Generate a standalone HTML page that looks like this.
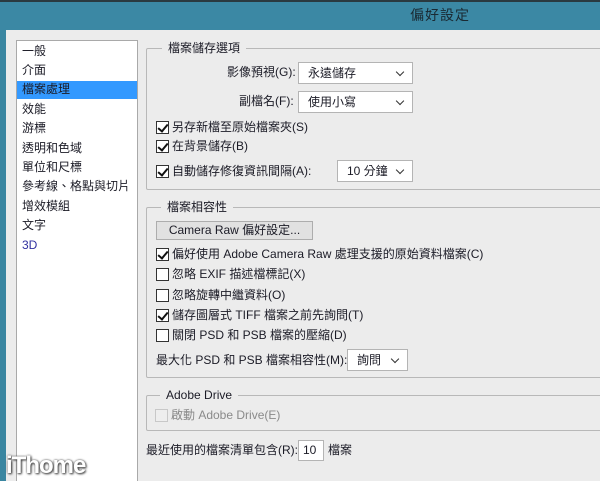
<!DOCTYPE html>
<html><head><meta charset="utf-8"><style>
*{margin:0;padding:0;box-sizing:border-box}
html,body{width:600px;height:481px;overflow:hidden}
body{background:#3a86a1;font-family:"Liberation Sans","Noto Sans CJK TC",sans-serif;font-size:12px;color:#1b1b26;position:relative}
.a{position:absolute;white-space:nowrap;line-height:14px}
#top{position:absolute;left:0;top:0;width:600px;height:2px;background:#2a3a40}
#title{position:absolute;left:0;top:2px;width:600px;height:28px;background:#3b88a4}
#body{position:absolute;left:6px;top:30px;width:594px;height:451px;background:#ececec}
#list{position:absolute;left:16px;top:40px;width:122px;height:441px;background:#fff;border:1px solid #a9a9a9;border-bottom:none}
.li{position:absolute;left:5px}
.sel{position:absolute;left:0;top:40px;width:120px;height:18px;background:#3399ff}
.grp{position:absolute;border:1px solid #b8b8b8;border-radius:2px}
.gl{position:absolute;background:#ececec;padding:0 6px;line-height:14px}
.sl{position:absolute;background:#fff;border:1px solid #b4b4b4;height:22px;line-height:20px;padding-left:9px}
.sl:after{content:"";position:absolute;right:9px;top:6px;width:5px;height:5px;border-right:1.5px solid #333;border-bottom:1.5px solid #333;transform:rotate(45deg)}
.cb{position:absolute;width:13px;height:13px;background:#fff;border:1px solid #333}
.cb.c:after{content:"";position:absolute;left:3px;top:0px;width:4px;height:8px;border-right:2px solid #111;border-bottom:2px solid #111;transform:rotate(40deg)}
.btn{position:absolute;background:#e1e1e1;border:1px solid #adadad;text-align:center;line-height:17px}
</style></head><body>
<div id="top"></div><div id="title"></div>
<div class="a" style="left:410px;top:8px;font-size:14px;color:#1a2a33;letter-spacing:1px">偏好設定</div>
<div id="body"></div>
<div id="list">
<div class="sel"></div>
<div class="a li" style="top:3px">一般</div>
<div class="a li" style="top:22px">介面</div>
<div class="a li" style="top:41px">檔案處理</div>
<div class="a li" style="top:61px">效能</div>
<div class="a li" style="top:80px">游標</div>
<div class="a li" style="top:100px">透明和色域</div>
<div class="a li" style="top:119px">單位和尺標</div>
<div class="a li" style="top:138px">參考線、格點與切片</div>
<div class="a li" style="top:158px">增效模組</div>
<div class="a li" style="top:177px">文字</div>
<div class="a li" style="top:197px;color:#3030a0">3D</div>
</div>

<div class="grp" style="left:146px;top:48px;width:470px;height:142px"></div>
<div class="gl" style="left:162px;top:41px">檔案儲存選項</div>
<div class="a" style="left:227px;top:65px">影像預視(G):</div>
<div class="sl" style="left:298px;top:62px;width:115px">永遠儲存</div>
<div class="a" style="left:239px;top:94px">副檔名(F):</div>
<div class="sl" style="left:298px;top:91px;width:115px">使用小寫</div>
<div class="cb c" style="left:156px;top:121px"></div><div class="a" style="left:172px;top:120px">另存新檔至原始檔案夾(S)</div>
<div class="cb c" style="left:156px;top:140px"></div><div class="a" style="left:172px;top:139px">在背景儲存(B)</div>
<div class="cb c" style="left:156px;top:165px"></div><div class="a" style="left:172px;top:164px">自動儲存修復資訊間隔(A):</div>
<div class="sl" style="left:337px;top:160px;width:76px">10 分鐘</div>

<div class="grp" style="left:146px;top:207px;width:470px;height:171px"></div>
<div class="gl" style="left:161px;top:200px">檔案相容性</div>
<div class="btn" style="left:156px;top:221px;width:157px;height:19px">Camera Raw 偏好設定...</div>
<div class="cb c" style="left:156px;top:248px"></div><div class="a" style="left:172px;top:247px">偏好使用 Adobe Camera Raw 處理支援的原始資料檔案(C)</div>
<div class="cb" style="left:156px;top:268px"></div><div class="a" style="left:172px;top:267px">忽略 EXIF 描述檔標記(X)</div>
<div class="cb" style="left:156px;top:289px"></div><div class="a" style="left:172px;top:288px">忽略旋轉中繼資料(O)</div>
<div class="cb c" style="left:156px;top:309px"></div><div class="a" style="left:172px;top:308px">儲存圖層式 TIFF 檔案之前先詢問(T)</div>
<div class="cb" style="left:156px;top:329px"></div><div class="a" style="left:172px;top:328px">關閉 PSD 和 PSB 檔案的壓縮(D)</div>
<div class="a" style="left:156px;top:353px">最大化 PSD 和 PSB 檔案相容性(M):</div>
<div class="sl" style="left:347px;top:349px;width:61px">詢問</div>

<div class="grp" style="left:146px;top:395px;width:470px;height:36px"></div>
<div class="gl" style="left:160px;top:388px">Adobe Drive</div>
<div class="cb" style="left:155px;top:409px;border-color:#c8c8c8;background:#eee"></div><div class="a" style="left:171px;top:408px;color:#8a8a8a">啟動 Adobe Drive(E)</div>

<div class="a" style="left:146px;top:443px">最近使用的檔案清單包含(R):</div>
<div style="position:absolute;left:298px;top:440px;width:26px;height:21px;background:#fff;border:1px solid #b4b4b4;line-height:19px;padding-left:4px">10</div>
<div class="a" style="left:328px;top:443px">檔案</div>

<div class="a" style="left:6px;top:452px;font-size:24px;line-height:28px;font-weight:bold;color:#fff;text-shadow:0 0 2px #555,1px 1px 2px #333;letter-spacing:-1px">iThome</div>
</body></html>
